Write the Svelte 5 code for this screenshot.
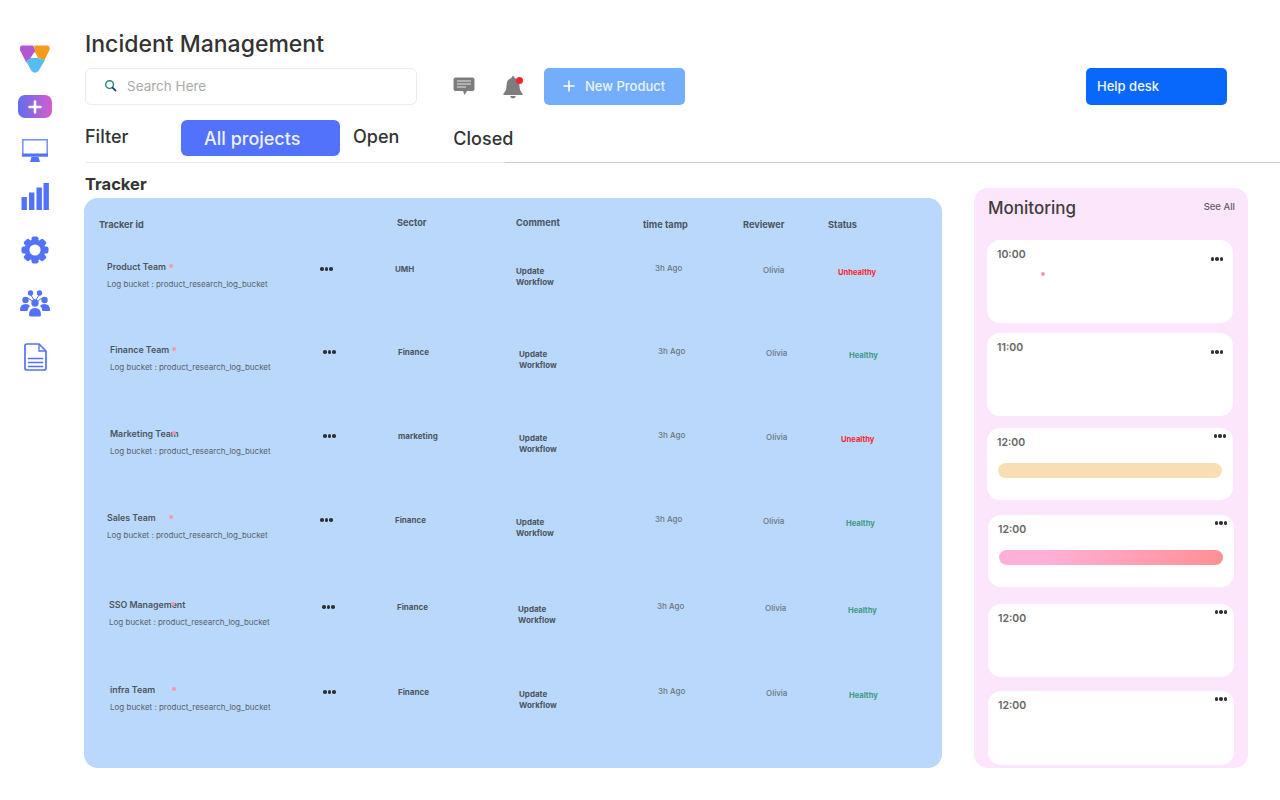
<script>
	const navBars = [
		{ x: 0.5, y: 14, h: 13 },
		{ x: 8, y: 9.5, h: 17.5 },
		{ x: 15.5, y: 4.5, h: 22.5 },
		{ x: 22.5, y: 0, h: 27 }
	];

	const rows = [
		{ name: 'Product Team', sector: 'UMH', status: 'Unhealthy', shift: 0, height: 83 },
		{ name: 'Finance Team', sector: 'Finance', status: 'Healthy', shift: 3, height: 84 },
		{ name: 'Marketing Team', sector: 'marketing', status: 'Unealthy', shift: 3, height: 84 },
		{ name: 'Sales Team', sector: 'Finance', status: 'Healthy', shift: 0, height: 87 },
		{ name: 'SSO Management', sector: 'Finance', status: 'Healthy', shift: 2, height: 85 },
		{ name: 'infra Team', sector: 'Finance', status: 'Healthy', shift: 3, height: 60 }
	];

	const slots = [
		{ time: '10:00', height: 83, gap: 10, dot: true },
		{ time: '11:00', height: 83, gap: 12 },
		{ time: '12:00', height: 72, gap: 15, bar: 'sand', small: true },
		{ time: '12:00', height: 72, gap: 17, bar: 'rose', small: true, nudge: true },
		{ time: '12:00', height: 73, gap: 14, small: true, nudge: true },
		{ time: '12:00', height: 74, gap: 0, small: true, nudge: true }
	];
</script>

<div class="page">
	<aside class="rail">
		<svg class="logo" viewBox="0 0 32 30" width="32" height="30">
			<path d="M3 1.5 H14 L17 7 L11.5 14.5 L8 18.5 Q7 18.5 6 16 L1 6 Q0.5 1.5 3 1.5 Z" fill="#b257cf" />
			<path d="M15 1.5 H28 Q31.5 1.5 30.5 6 L25.5 16 L19 14 L16 8 Z" fill="#f59a1c" />
			<path d="M7 17 L11.5 14 H19 L26 16 L19.5 27 Q16 30.5 12.5 27 Z" fill="#55bdf0" />
			<path d="M15.3 8 L18.6 14 H11.6 Z" fill="#fff" />
		</svg>
		<div class="add">
			<svg viewBox="0 0 14 14" width="14" height="14">
				<path d="M7 1.5 V12.5 M1.5 7 H12.5" stroke="#fff" stroke-width="2.6" stroke-linecap="round" />
			</svg>
		</div>
		<svg class="nav-monitor" viewBox="0 0 26 24" width="26" height="24">
			<rect x="0.8" y="0.8" width="24.4" height="16" fill="#fff" stroke="#7d94fc" stroke-width="1.6" />
			<rect x="0" y="14.5" width="26" height="3" fill="#5272fb" />
			<path d="M9.5 18 H16.5 L18 23 H8 Z" fill="#5272fb" />
		</svg>
		<svg class="nav-chart" viewBox="0 0 28 27" width="28" height="27">
			{#each navBars as bar}
				<rect x={bar.x} y={bar.y} width="5.4" height={bar.h} fill="#5272fb" />
			{/each}
		</svg>
		<svg class="nav-gear" viewBox="0 0 28 28" width="28" height="28">
			<g fill="#5272fb">
				<rect x="10.5" y="0.5" width="7" height="27" rx="2" />
				<rect x="10.5" y="0.5" width="7" height="27" rx="2" transform="rotate(45 14 14)" />
				<rect x="10.5" y="0.5" width="7" height="27" rx="2" transform="rotate(90 14 14)" />
				<rect x="10.5" y="0.5" width="7" height="27" rx="2" transform="rotate(135 14 14)" />
				<circle cx="14" cy="14" r="10.5" />
			</g>
			<circle cx="14" cy="14" r="5.6" fill="#fff" />
		</svg>
		<svg class="nav-team" viewBox="0 0 30 27" width="30" height="27">
			<g fill="#5272fb">
				<circle cx="10.5" cy="3" r="2.7" />
				<circle cx="19.5" cy="3" r="2.7" />
				<circle cx="5.5" cy="10" r="3.2" />
				<circle cx="24.5" cy="10" r="3.2" />
				<circle cx="15" cy="13" r="3.7" />
				<path d="M0 20 Q0 14 5.5 14 Q9 14 10 16 Q7.5 18 7.5 21 H1 Q0 21 0 20 Z" />
				<path d="M30 20 Q30 14 24.5 14 Q21 14 20 16 Q22.5 18 22.5 21 H29 Q30 21 30 20 Z" />
				<path d="M9 25 Q9 18 15 18 Q21 18 21 25 Q21 26.5 19 26.5 H11 Q9 26.5 9 25 Z" />
			</g>
			<path d="M11 5 L14 10 M19 5 L16 10 M8 8 L12 11 M22 8 L18 11" stroke="#5272fb" stroke-width="1" />
		</svg>
		<svg class="nav-doc" viewBox="0 0 23 28" width="23" height="28">
			<path d="M3 1 H15 L22 8 V25 Q22 27 20 27 H3 Q1 27 1 25 V3 Q1 1 3 1 Z" fill="none" stroke="#5272fb" stroke-width="1.7" />
			<path d="M15 1 V8 H22" fill="none" stroke="#5272fb" stroke-width="1.3" />
			<path d="M3.8 15.5 H19.2 M3.8 19.5 H19.2 M3.8 23.5 H19.2" stroke="#5272fb" stroke-width="1.7" />
		</svg>
	</aside>

	<main class="content">
		<h1>Incident Management</h1>

		<div class="toolbar">
			<div class="search">
				<svg viewBox="0 0 14 14" width="13" height="13">
					<circle cx="6" cy="6" r="4.2" fill="none" stroke="#2f8a7c" stroke-width="1.6" />
					<path d="M9.2 9.2 L12.5 12.5" stroke="#1d3f5e" stroke-width="1.8" stroke-linecap="round" />
				</svg>
				<span>Search Here</span>
			</div>
			<svg class="chat" viewBox="0 0 22 19" width="22" height="19">
				<path d="M2.5 0.5 H19.5 Q21.5 0.5 21.5 2.5 V12 Q21.5 14 19.5 14 H14 L11.5 18 L10 14 H2.5 Q0.5 14 0.5 12 V2.5 Q0.5 0.5 2.5 0.5 Z" fill="#7d7d7d" />
				<path d="M4 4 H18 M4 7 H18 M4 10 H13" stroke="#e4e4e4" stroke-width="1.2" />
			</svg>
			<div class="bell">
				<svg viewBox="0 0 20 24" width="20" height="24">
					<path d="M10 1 Q11.5 1 11.5 3 Q16.5 4.5 16.5 11 Q16.5 16 19.5 18.5 V20 H0.5 V18.5 Q3.5 16 3.5 11 Q3.5 4.5 8.5 3 Q8.5 1 10 1 Z" fill="#7d7d7d" />
					<path d="M7 21 H13 Q12 23.5 10 23.5 Q8 23.5 7 21 Z" fill="#7d7d7d" />
				</svg>
				<i></i>
			</div>
			<button class="new-product">
				<svg viewBox="0 0 12 12" width="12" height="12">
					<path d="M6 0.5 V11.5 M0.5 6 H11.5" stroke="#fff" stroke-width="1.5" />
				</svg>
				New Product
			</button>
			<button class="help">Help desk</button>
		</div>

		<div class="filters">
			<span class="filter-label">Filter</span>
			<button class="tab active">All projects</button>
			<span class="tab-open">Open</span>
			<span class="tab-closed">Closed</span>
		</div>
		<div class="divider"></div>

		<div class="columns">
			<section class="tracker">
				<h2>Tracker</h2>
				<div class="table">
					<div class="table-head">
						<span class="h-id">Tracker id</span>
						<span class="h-sector">Sector</span>
						<span class="h-comment">Comment</span>
						<span class="h-time">time tamp</span>
						<span class="h-reviewer">Reviewer</span>
						<span class="h-status">Status</span>
					</div>
					{#each rows as row}
						<div class="row" style="margin-left: {row.shift}px; height: {row.height}px">
							<div class="team">
								<strong>{row.name}</strong>
								<i class="mark"></i>
								<small>Log bucket : product_research_log_bucket</small>
							</div>
							<div class="dots"><i></i><i></i><i></i></div>
							<div class="sector">{row.sector}</div>
							<div class="comment">Update<br />Workflow</div>
							<div class="time">3h Ago</div>
							<div class="reviewer">Olivia</div>
							<div class="status" class:bad={row.status !== 'Healthy'}>{row.status}</div>
						</div>
					{/each}
				</div>
			</section>

			<section class="monitoring">
				<div class="mon-head">
					<h3>Monitoring</h3>
					<span>See All</span>
				</div>
				{#each slots as slot}
					<div
						class="slot"
						class:small={slot.small}
						class:nudge={slot.nudge}
						style="height: {slot.height}px; margin-bottom: {slot.gap}px"
					>
						<span class="slot-time">{slot.time}</span>
						<div class="dots"><i></i><i></i><i></i></div>
						{#if slot.dot}<i class="slot-dot"></i>{/if}
						{#if slot.bar}<div class="bar {slot.bar}"></div>{/if}
					</div>
				{/each}
			</section>
		</div>
	</main>
</div>

<style>
	:global(body) {
		background: #fff;
		color: #333;
		font-family: 'Inter', 'Liberation Sans', sans-serif;
	}

	.page {
		display: flex;
		height: 800px;
		overflow: hidden;
	}

	.rail {
		width: 85px;
		flex-shrink: 0;
		display: flex;
		flex-direction: column;
		align-items: center;
		padding: 44px 15px 0 0;
		box-sizing: border-box;
	}

	.add {
		width: 34px;
		height: 23px;
		margin-top: 21px;
		flex-shrink: 0;
		border-radius: 7px;
		background: linear-gradient(90deg, #5f6df0, #d75ccb);
		display: flex;
		align-items: center;
		justify-content: center;
	}

	.nav-monitor {
		margin-top: 21px;
	}

	.nav-chart {
		margin-top: 20px;
	}

	.nav-gear,
	.nav-team,
	.nav-doc {
		margin-top: 26px;
	}

	.content {
		flex: 1;
		min-width: 0;
		padding-top: 30px;
	}

	h1 {
		margin: 0;
		font-size: 23px;
		line-height: 28px;
		font-weight: 500;
		color: #333;
	}

	.toolbar {
		display: flex;
		align-items: center;
		margin-top: 10px;
		height: 37px;
	}

	.search {
		width: 332px;
		height: 37px;
		box-sizing: border-box;
		border: 1px solid #ececec;
		border-radius: 6px;
		display: flex;
		align-items: center;
		gap: 10px;
		padding: 0 0 2px 18px;
		font-size: 13.5px;
		color: #a9a9a9;
	}

	.chat {
		margin-left: 36px;
	}

	.bell {
		position: relative;
		margin-left: 28px;
		height: 24px;
	}

	.bell i {
		position: absolute;
		top: 2px;
		right: 0;
		width: 7px;
		height: 7px;
		border-radius: 50%;
		background: #f0262f;
	}

	button {
		border: none;
		font-family: inherit;
		cursor: pointer;
	}

	.new-product {
		margin-left: 21px;
		width: 141px;
		height: 37px;
		border-radius: 5px;
		background: #74aefb;
		color: #e9f2ff;
		font-size: 13px;
		font-weight: 500;
		display: flex;
		align-items: center;
		gap: 10px;
		padding: 0 0 2px 19px;
	}

	.help {
		margin-left: 401px;
		width: 141px;
		height: 37px;
		border-radius: 5px;
		background: #0868fb;
		color: #f2f7ff;
		font-size: 13px;
		font-weight: 500;
		text-align: left;
		padding: 0 0 2px 11px;
	}

	.filters {
		display: flex;
		align-items: center;
		margin-top: 15px;
		height: 36px;
		font-size: 18px;
		font-weight: 500;
		color: #333;
	}

	.filter-label {
		width: 96px;
		padding-bottom: 4px;
	}

	.tab {
		width: 159px;
		height: 36px;
		border-radius: 6px;
		background: #5272fb;
		color: #eef1ff;
		font-size: 18px;
		font-weight: 500;
		padding-left: 23px;
		text-align: left;
	}

	.tab-open {
		margin-left: 13px;
		padding-bottom: 4px;
	}

	.tab-closed {
		margin-left: 54px;
	}

	.divider {
		height: 1px;
		margin-top: 6px;
		background: linear-gradient(90deg, #e8e8e8 0 420px, #d0d0d0 420px);
	}

	.columns {
		display: flex;
		align-items: flex-start;
	}

	.tracker {
		width: 858px;
		margin-left: -1px;
	}

	h2 {
		margin: 11px 0 4px 1px;
		font-size: 16.5px;
		line-height: 20px;
		font-weight: 700;
		color: #333;
	}

	.table {
		height: 570px;
		background: #b9d8fc;
		border-radius: 14px;
		box-sizing: border-box;
		overflow: hidden;
	}

	.table-head {
		display: grid;
		grid-template-columns: 298px 119px 127px 100px 85px 1fr;
		height: 50px;
		padding: 0 0 0 15px;
		align-items: center;
		font-size: 9.2px;
		font-weight: 700;
		color: #4d5560;
		margin-bottom: 13px;
	}

	.h-sector,
	.h-comment {
		transform: translateY(-1px);
	}

	.h-id,
	.h-time,
	.h-reviewer,
	.h-status {
		transform: translateY(1px);
	}

	.row {
		display: grid;
		grid-template-columns: 213px 75px 121px 139px 108px 74px 1fr;
		padding-left: 23px;
		align-items: start;
		font-size: 8px;
		font-weight: 700;
		color: #4d5560;
	}

	.team {
		position: relative;
		display: flex;
		flex-direction: column;
		gap: 7px;
	}

	.team strong {
		font-size: 8.8px;
		line-height: 11px;
		font-weight: 600;
	}

	.team small {
		font-size: 8px;
		line-height: 10px;
		font-weight: 400;
		color: #5a626c;
	}

	.mark {
		position: absolute;
		left: 62px;
		top: 3px;
		width: 4px;
		height: 4px;
		border-radius: 50%;
		background: #f49aa8;
	}

	.dots {
		display: flex;
		gap: 1px;
		padding-top: 6px;
	}

	.dots i {
		width: 3.5px;
		height: 3.5px;
		border-radius: 50%;
		background: #2f3136;
	}

	.sector {
		padding-top: 3px;
	}

	.comment {
		padding-top: 5px;
		line-height: 10.5px;
	}

	.time {
		padding-top: 2px;
		font-weight: 500;
		color: #6e7680;
	}

	.reviewer {
		padding-top: 4px;
		font-weight: 500;
		color: #6e7680;
	}

	.status {
		padding: 7px 0 0 9px;
		font-size: 7.6px;
		color: #3e9b83;
	}

	.status.bad {
		padding-left: 1px;
		color: #fb1f2b;
	}

	.monitoring {
		width: 274px;
		height: 580px;
		margin: 25px 0 0 32px;
		box-sizing: border-box;
		padding: 0 13px;
		background: #fce6fb;
		border-radius: 14px;
	}

	.mon-head {
		display: flex;
		justify-content: space-between;
		height: 52px;
		padding: 9px 0 0 1px;
		box-sizing: border-box;
	}

	h3 {
		margin: 0;
		font-size: 17px;
		line-height: 22px;
		font-weight: 500;
		color: #3d3d3d;
	}

	.mon-head span {
		font-size: 9.5px;
		font-weight: 500;
		line-height: 20px;
		color: #5f5f5f;
	}

	.slot {
		position: relative;
		width: 246px;
		background: #fff;
		border-radius: 13px;
		box-sizing: border-box;
		padding: 8px 10px 0;
	}

	.slot.nudge {
		margin-left: 1px;
	}

	.slot-time {
		display: block;
		font-size: 10.5px;
		font-weight: 600;
		line-height: 13px;
		color: #666;
	}

	.slot .dots {
		position: absolute;
		right: 10px;
		top: 17px;
		padding: 0;
	}

	.slot.small .dots {
		top: 6px;
		right: 7px;
	}

	.slot-dot {
		position: absolute;
		left: 54px;
		top: 32px;
		width: 4px;
		height: 4px;
		background: #f29ab0;
		border-radius: 50%;
	}

	.bar {
		height: 15px;
		margin: 14px 1px 0;
		border-radius: 8px;
	}

	.sand {
		background: #f9deb4;
	}

	.rose {
		background: linear-gradient(90deg, #ffb0d8 20%, #ff8f94);
	}
</style>
